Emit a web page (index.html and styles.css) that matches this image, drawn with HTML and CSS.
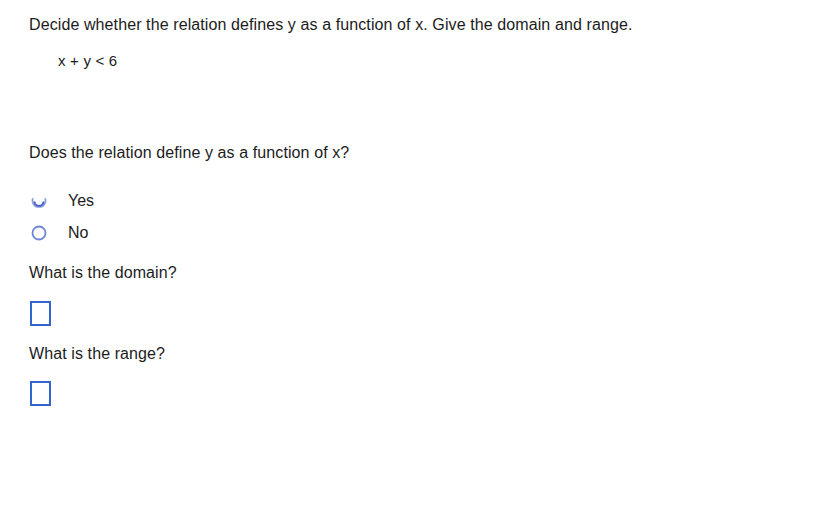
FILE: index.html
```html
<!DOCTYPE html>
<html lang="en">
<head>
    <meta charset="UTF-8">
    <title>Function, domain and range</title>
    <link rel="stylesheet" href="styles.css">
</head>
<body>
    <div class="question">
        <p class="prompt">Decide whether the relation defines y as a function of x. Give the domain and range.</p>
        <p class="equation">x + y &lt; 6</p>

        <p class="ask ask-function">Does the relation define y as a function of x?</p>

        <div class="choices">
            <label class="choice">
                <svg class="radio" width="16" height="16" viewBox="0 0 16 16">
                    <path d="M1.9 5.2 A6.5 6.5 0 1 0 14.1 5.2" fill="none" stroke="#8a9de0" stroke-width="1.8"/>
                    <path d="M3.6 8.4 A4.4 4.4 0 0 0 12.4 8.4" fill="none" stroke="#4a63c8" stroke-width="1.9"/>
                </svg>
                <span>Yes</span>
            </label>
            <label class="choice">
                <svg class="radio" width="16" height="16" viewBox="0 0 16 16">
                    <circle cx="8" cy="8" r="6.5" fill="none" stroke="#6f86d8" stroke-width="1.8"/>
                </svg>
                <span>No</span>
            </label>
        </div>

        <p class="ask ask-domain">What is the domain?</p>
        <div class="answer-box"></div>

        <p class="ask ask-range">What is the range?</p>
        <div class="answer-box"></div>
    </div>
</body>
</html>
```

FILE: styles.css
```css
body {
    margin: 0;
    background: #fff;
    color: #1c1c1c;
    font-family: "Liberation Sans", Arial, sans-serif;
    font-size: 16px;
}

.question {
    padding: 16px 29px;
}

p {
    margin: 0;
    line-height: 18px;
}

.prompt,
.ask {
    letter-spacing: 0.1px;
}

.equation {
    margin-top: 18px;
    margin-left: 29px;
    font-size: 15px;
    letter-spacing: 0.2px;
}

.ask-function {
    margin-top: 74px;
}

.choices {
    margin-top: 30px;
    display: flex;
    flex-direction: column;
    gap: 14px;
}

.choice {
    display: flex;
    align-items: center;
    height: 18px;
    margin-left: 2px;
}

.radio {
    flex: none;
    margin-right: 21px;
}

.ask-domain {
    margin-top: 22px;
}

.answer-box {
    width: 17px;
    height: 21px;
    border: 2px solid #3366cc;
    margin-left: 1px;
    margin-top: 19px;
}

.ask-range {
    margin-top: 19px;
}

.ask-range + .answer-box {
    margin-top: 18px;
}
```
